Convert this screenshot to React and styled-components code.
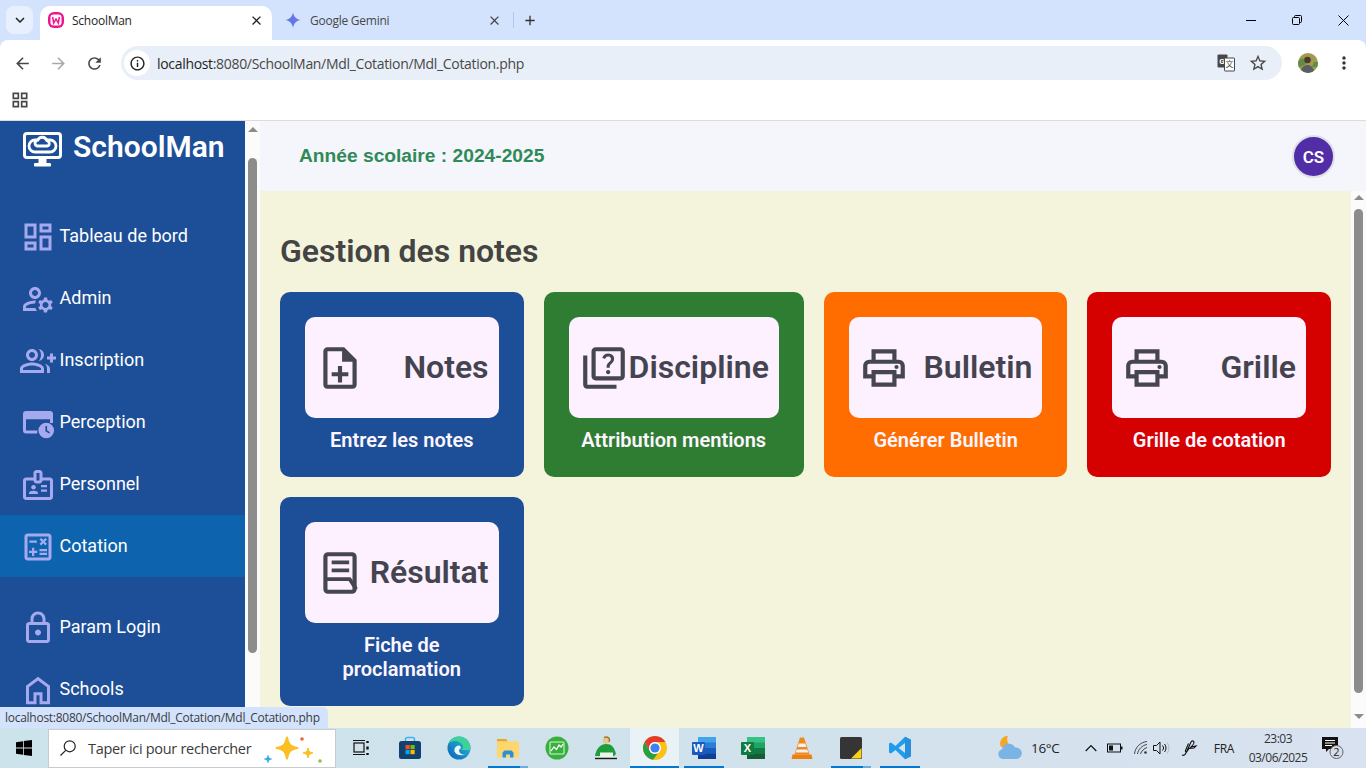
import React from "react";
import styled, { createGlobalStyle } from "styled-components";
import {
  MdArrowBack, MdArrowForward, MdRefresh, MdOutlineInfo, MdStarBorder, MdMoreVert, MdClose, MdAdd,
  MdKeyboardArrowDown, MdOutlineGridView, MdOutlineDashboard, MdOutlineManageAccounts, MdOutlineGroupAdd,
  MdOutlineBadge, MdOutlineCalculate, MdOutlineLock, MdOutlineNoteAdd, MdOutlineQuiz,
  MdOutlinePrint,
} from "react-icons/md";

const Global = createGlobalStyle`
  html, body { margin: 0; padding: 0; width: 1366px; height: 768px; overflow: hidden; }
  * { box-sizing: border-box; }
  body { font-family: Roboto, "Liberation Sans", sans-serif; }
`;

const UI = `"Open Sans", "Noto Sans", "Liberation Sans", sans-serif`;

const Root = styled.div`
  position: relative; width: 1366px; height: 768px; overflow: hidden;
  display: flex; flex-direction: column; background: #fff;
`;

/* ---------- browser chrome ---------- */
const TabStrip = styled.div`
  height: 40px; flex: none; background: #d3e3fd; display: flex; align-items: flex-end; padding-left: 6px;
`;
const TabMenu = styled.div`
  width: 27px; height: 28px; margin-bottom: 6px; margin-right: 7px; border-radius: 8px; background: #e8f0fe;
  display: flex; align-items: center; justify-content: center; color: #1f1f1f; font-size: 18px;
`;
const Tab = styled.div`
  height: 34px; width: ${p => p.$w}px; display: flex; align-items: center;
  padding: 0 ${p => p.$pr}px 6px ${p => p.$pl}px; gap: ${p => p.$gap}px;
  border-radius: 10px 10px 0 0; background: ${p => (p.$active ? "#fff" : "transparent")};
  font: 12px ${UI}; letter-spacing: -0.25px; color: ${p => (p.$active ? "#1f1f1f" : "#474747")};
`;
const TabTitle = styled.span`flex: 1; white-space: nowrap;`;
const TabClose = styled.span`
  width: 16px; height: 16px; display: flex; align-items: center; justify-content: center; font-size: 15px;
  color: ${p => (p.$active ? "#1f1f1f" : "#474747")};
`;
const TabSeparator = styled.div`width: 1px; height: 16px; background: #a8c7fa; margin: 0 0 12px 1px;`;
const NewTab = styled.div`
  width: 16px; height: 16px; margin: 0 0 12px 8px; font-size: 17px; color: #333;
  display: flex; align-items: center; justify-content: center;
`;
const WindowControls = styled.div`margin-left: auto; display: flex; height: 40px;`;
const WindowButton = styled.div`
  width: 46px; height: 40px; display: flex; align-items: center; justify-content: center; color: #000;
`;
const ToolbarWrap = styled.div`background: #d3e3fd; flex: none;`;
const Toolbar = styled.div`
  height: 40px; display: flex; align-items: center; padding: 6px 0 0 4px; background: #fff;
  border-radius: 8px 8px 0 0;
`;
const NavButton = styled.div`
  width: 36px; height: 34px; display: flex; align-items: center; justify-content: center; font-size: 19px;
  color: ${p => (p.$off ? "#a9a9a9" : "#474747")};
`;
const Omnibox = styled.div`
  width: 1161px; height: 34px; margin-left: 9px; border-radius: 17px; background: #e9eff8;
  display: flex; align-items: center; padding: 0 8px 0 3px;
`;
const InfoBadge = styled.div`
  width: 26px; height: 26px; border-radius: 50%; background: #fff; display: flex; align-items: center;
  justify-content: center; font-size: 17px; color: #1f1f1f; margin-right: 7px;
`;
const Url = styled.div`
  font: 14px ${UI}; letter-spacing: -0.32px; color: #474747; white-space: nowrap; flex: 1;
  b { font-weight: 400; color: #1f1f1f; }
`;
const OmniIcon = styled.div`
  width: 32px; height: 20px; display: flex; align-items: center; justify-content: center; color: #474747; font-size: 20px;
`;
const ProfileSlot = styled.div`
  width: 20px; height: 20px; margin-left: 16px; border-radius: 50%; overflow: hidden; flex: none;
`;
const MenuSlot = styled.div`
  width: 24px; height: 24px; margin-left: 14px; display: flex; align-items: center; justify-content: center;
  font-size: 20px; color: #333;
`;
const Bookmarks = styled.div`
  height: 41px; flex: none; background: #fff; border-bottom: 1px solid #dedcd6; padding-left: 10px;
  display: flex; align-items: center; font-size: 20px; color: #474747;
`;

/* ---------- page ---------- */
const Page = styled.div`flex: 1; min-height: 0; display: flex;`;
const Sidebar = styled.nav`
  width: 245px; flex: none; background: #1d4f98; overflow: hidden; color: #fff;
`;
const Brand = styled.div`
  height: 84px; display: flex; align-items: flex-start; padding: 11px 0 0 23px; gap: 11px;
`;
const BrandName = styled.div`
  font-size: 30px; line-height: 30px; font-weight: 600; color: #fff;
`;
const NavItem = styled.div`
  height: 62px; display: flex; align-items: center; gap: 3.5px; padding-left: 20px; flex: none;
  background: ${p => (p.$active ? "#0d63ae" : "transparent")};
  margin-top: ${p => (p.$spaced ? "19px" : "0")};
  font-size: 18px; color: #fff;
`;
const NavIcon = styled.span`
  width: 36px; height: 36px; flex: none; color: #a6a9ee; font-size: 36px; display: block; margin-top: 2px;
  svg { display: block; }
`;
const NavLabel = styled.span`margin-top: -2px;`;
const ScrollTrack = styled.div`
  width: 15px; flex: none; background: #fbfbfb; display: flex; flex-direction: column; align-items: center; position: relative;
`;
const ScrollArrow = styled.div`
  width: 0; height: 0; margin-top: ${p => p.$mt}px; border-left: 5px solid transparent; border-right: 5px solid transparent;
  ${p => (p.$down ? "border-top: 5px solid #8c8c8c;" : "border-bottom: 5px solid #8c8c8c;")}
  flex: none;
`;
const ScrollThumb = styled.div`
  width: 9px; height: ${p => p.$h}px; margin-top: ${p => p.$mt}px; border-radius: 5px; background: #8c8c8c; flex: none;
`;
const Main = styled.div`flex: 1; min-width: 0; display: flex; flex-direction: column;`;
const Header = styled.header`
  height: 70px; flex: none; background: #f5f5fc; display: flex; align-items: center; justify-content: space-between;
  padding: 0 31px 0 39px;
`;
const SchoolYear = styled.div`
  font: bold 19.2px "Liberation Sans", Arial, sans-serif; color: #2e8b57;
`;
const UserBadge = styled.div`
  width: 43px; height: 43px; border-radius: 50%; background: #512da8; border: 2px solid #dfdfe6; color: #fff;
  display: flex; align-items: center; justify-content: center; font-size: 17px; font-weight: 600; margin-top: 1px;
`;
const ContentRow = styled.div`flex: 1; min-height: 0; display: flex;`;
const Content = styled.main`flex: 1; min-width: 0; background: #f4f4dc; padding: 41px 20px 0; overflow: hidden;`;
const Title = styled.h1`
  margin: 0 0 22px; font-size: 32px; line-height: 38px; font-weight: 600; color: #444;
`;
const Grid = styled.div`display: grid; grid-template-columns: repeat(4, 1fr); gap: 20px;`;
const Card = styled.div`
  background: ${p => p.$color}; border-radius: 10px; padding: 25px; color: #fff; align-self: start;
`;
const CardTop = styled.div`
  height: 101px; background: #fdf0ff; border-radius: 10px; padding: 0 10px; display: flex; align-items: center;
  justify-content: space-between; color: #46464f;
`;
const CardIcon = styled.span`font-size: 50px; width: 50px; height: 50px; flex: none; svg { display: block; }`;
const CardName = styled.span`font-size: 32px; font-weight: 600; color: #444450; white-space: nowrap; margin-top: -2px;`;
const CardLabel = styled.div`
  margin-top: 10px; text-align: center; font-size: 20px; line-height: 24px; font-weight: 600; color: #fdf6ff;
`;
const StatusBubble = styled.div`
  position: absolute; left: 0; top: 707px; width: 328px; height: 21px; background: #d3e3fd; border-radius: 0 5px 0 0;
  font: 12px ${UI}; letter-spacing: -0.27px; color: #3c3c3c; padding: 2px 0 0 5px; white-space: nowrap;
`;

/* ---------- taskbar ---------- */
const Taskbar = styled.footer`
  height: 40px; flex: none; display: flex; align-items: center;
  background: linear-gradient(90deg, #cde3ec 0%, #d0e2ec 50%, #d9e2f0 100%);
`;
const StartSlot = styled.div`width: 48px; height: 40px; display: flex; align-items: center; justify-content: center;`;
const SearchBox = styled.div`
  width: 288px; height: 39px; background: #fff; border: 1px solid #c5cbd0; display: flex; align-items: center;
  padding-left: 11px; font: 14.5px ${UI}; letter-spacing: -0.3px; color: #3a3a3a; position: relative;
`;
const SearchText = styled.span`margin-left: 12px; white-space: nowrap; flex: 1;`;
const TaskSlot = styled.div`
  width: 49px; height: 40px; flex: none; display: flex; align-items: center; justify-content: center; position: relative;
  background: ${p => (p.$active ? "#e8f2f7" : "transparent")};
  &::after {
    content: ""; display: ${p => (p.$open ? "block" : "none")}; position: absolute; bottom: 0;
    left: ${p => (p.$active ? 0 : 5)}px; right: ${p => (p.$active ? 0 : 4)}px; height: 2px;
    background: ${p => (p.$stack ? "linear-gradient(90deg, #0078d4 80%, #6aaee0 80%)" : "#0078d4")};
  }
`;
const TaskApps = styled.div`display: flex;`;
const Tray = styled.div`margin-left: auto; display: flex; align-items: center; height: 40px; color: #222; padding-right: 8px;`;
const Weather = styled.div`display: flex; align-items: center; gap: 8px; font: 13.5px ${UI}; letter-spacing: -0.3px; width: 82px;`;
const TrayIcon = styled.div`
  width: ${p => p.$w || 24}px; margin-left: ${p => p.$ml || 0}px; height: 40px; display: flex; align-items: center;
  justify-content: center; flex: none;
`;
const TrayLang = styled.div`width: 34px; text-align: center; font: 12px ${UI}; letter-spacing: -0.3px;`;
const Clock = styled.div`
  width: 60px; margin-left: 7px; text-align: center; font: 12px/19px ${UI}; letter-spacing: -0.5px; color: #333;
`;
const NotifySlot = styled.div`width: 50px; height: 40px; display: flex; align-items: center; justify-content: center;`;

/* ---------- drawn icons ---------- */
const WampIcon = () => (
  <svg width="16" height="16" viewBox="0 0 16 16">
    <rect width="16" height="16" rx="6" fill="#f0148c" />
    <rect x="2.5" y="2.5" width="11" height="11" rx="3" fill="#fff" />
    <path d="M4.6 5l1.1 6 2.3-4 2.3 4 1.1-6" fill="none" stroke="#f0148c" strokeWidth="1.5" />
  </svg>
);
const GeminiIcon = () => (
  <svg width="16" height="16" viewBox="0 0 16 16">
    <defs><linearGradient id="gem" x1="0" y1="1" x2="1" y2="0"><stop offset="0" stopColor="#3f7df0" /><stop offset="1" stopColor="#8a6fe0" /></linearGradient></defs>
    <path d="M8 0C8.600 4.600 11.400 7.400 16 8 11.400 8.600 8.600 11.400 8 16 7.400 11.400 4.600 8.600 0 8 4.600 7.400 7.400 4.600 8 0Z" fill="url(#gem)" />
  </svg>
);
const MinimizeIcon = () => <svg width="10" height="10" viewBox="0 0 10 10"><path d="M0 5.500h10" stroke="#000" /></svg>;
const RestoreIcon = () => (
  <svg width="10" height="10" viewBox="0 0 10 10" fill="none" stroke="#000"><rect x=".5" y="2.500" width="7" height="7" rx="1" /><path d="M2.500 2.500V1.500a1 1 0 0 1 1-1h5a1 1 0 0 1 1 1v5a1 1 0 0 1-1 1h-1" /></svg>
);
const CloseIcon = () => <svg width="11" height="11" viewBox="0 0 11 11"><path d="M.5.500l10 10M10.500.500l-10 10" stroke="#000" /></svg>;
const TranslateIcon = () => (
  <svg width="18" height="18" viewBox="0 0 18 18">
    <rect x="0.500" y="0.500" width="10" height="13" rx="1" fill="#474747" />
    <text x="2.200" y="9.500" fontSize="8" fontWeight="700" fill="#fff" fontFamily="Roboto, sans-serif">G</text>
    <rect x="7.500" y="4" width="10" height="13" rx="0.500" fill="#fff" stroke="#474747" />
    <text x="8.600" y="13" fontSize="8" fill="#474747" fontFamily="'Noto Sans CJK SC', sans-serif">文</text>
  </svg>
);
const ProfilePhoto = () => (
  <svg width="20" height="20" viewBox="0 0 20 20">
    <rect width="20" height="20" fill="#a29a4f" />
    <path d="M0 8l5-3 3 6-8 4zM20 9l-4 0-2 5 6 0z" fill="#5f8d46" />
    <circle cx="9.500" cy="7" r="3.300" fill="#4b3a2e" />
    <path d="M2.500 20c.5-6 4-8 7-8s6 2 7 8z" fill="#5a5f66" />
  </svg>
);
const BrandLogo = () => (
  <svg width="39" height="35" viewBox="0 0 39 35" fill="none" stroke="#fff">
    <rect x="1.500" y="1.500" width="36" height="24" rx="2.500" strokeWidth="3" />
    <rect x="15.500" y="26" width="8" height="5" fill="#fff" stroke="none" />
    <rect x="11" y="31" width="17" height="3.500" rx="1" fill="#fff" stroke="none" />
    <rect x="6" y="8" width="27" height="12" rx="6" strokeWidth="2.800" />
    <path d="M14 14a3 3 0 0 1 .8-5.800 4.800 4.800 0 0 1 9 .4 2.800 2.800 0 0 1 .6 5.400z" fill="#1d4f98" strokeWidth="2.800" />
  </svg>
);
const CardClockIcon = () => (
  <svg width="1em" height="1em" viewBox="0 0 24 24" fill="currentColor">
    <path d="M4 4h16a2 2 0 0 1 2 2v6h-2V9.500H4V17h7.500v2H4a2 2 0 0 1-2-2V6a2 2 0 0 1 2-2z" />
    <circle cx="17.500" cy="17" r="5.200" />
    <path d="M17.500 14v3.200l2.200 1.400" fill="none" stroke="#1d4f98" strokeWidth="1.100" />
  </svg>
);
const HomeIcon = () => (
  <svg width="1em" height="1em" viewBox="0 0 24 24" fill="currentColor">
    <path d="M6 19.500h3v-6h6v6h3v-9.300l-6-4.500-6 4.500zM4 21.500V9.200l8-6 8 6v12.300h-7v-6h-2v6z" />
  </svg>
);
const SummaryIcon = () => (
  <svg width="1em" height="1em" viewBox="0 0 24 24" fill="none" stroke="currentColor">
    <rect x="5" y="3" width="14" height="18" rx="1.200" strokeWidth="2" />
    <path d="M8 6.900h8.400M8 10.700h8.400" strokeWidth="1.800" />
    <path d="M5 14.900h11.600l3.200 4.900" strokeWidth="1.800" />
  </svg>
);
const WindowsLogo = () => (
  <svg width="16" height="16" viewBox="0 0 16 16" fill="#000">
    <path d="M0 2.200L7 1.200V7.600H0zM7.800 1.100L16 0V7.600H7.800zM0 8.400H7V14.800L0 13.800zM7.800 8.400H16V16L7.800 14.900z" />
  </svg>
);
const SearchIcon = () => (
  <svg width="16" height="16" viewBox="0 0 16 16" fill="none" stroke="#222" strokeWidth="1.200">
    <circle cx="9.700" cy="6.300" r="5.500" /><path d="M5.700 10.300L.5 15.500" />
  </svg>
);
const Star4 = ({ x, y, s, c }) => (
  <path transform={`translate(${x} ${y}) scale(${s})`} d="M0-10C1.500-3 3-1.500 10 0 3 1.500 1.500 3 0 10-1.500 3-3 1.500-10 0-3-1.500-1.500-3 0-10Z" fill={c} stroke={c} strokeWidth="2" strokeLinejoin="round" />
);
const Sparkles = () => (
  <svg width="64" height="32" viewBox="0 0 64 32" style={{ position: "absolute", right: 9, top: 3 }}>
    <Star4 x={25} y={15} s={1.05} c="#fbbf24" />
    <Star4 x={46} y={20} s={0.5} c="#fbbf24" />
    <Star4 x={6} y={26} s={0.36} c="#29a8e6" />
    <circle cx="40" cy="6" r="1.800" fill="#e8683a" />
    <circle cx="58" cy="28" r="1.800" fill="#8cc63f" />
  </svg>
);
const TaskViewIcon = () => (
  <svg width="18" height="18" viewBox="0 0 18 18" fill="none" stroke="#111" strokeWidth="1.200">
    <rect x="2" y="4" width="10" height="9" /><path d="M1 1.500h12M1 15.500h12" /><path d="M15.500 2v2M15.500 7.500v3M15.500 14v2" strokeWidth="2.400" />
  </svg>
);
const StoreIcon = () => (
  <svg width="24" height="24" viewBox="0 0 24 24">
    <path d="M7.500 5V3.500A2 2 0 0 1 9.500 1.500h5a2 2 0 0 1 2 2V5" fill="none" stroke="#3fb4ea" strokeWidth="1.600" />
    <rect x="1" y="5" width="22" height="18" rx="2.500" fill="#12406f" />
    <rect x="7.500" y="9" width="4.200" height="4.200" fill="#f25022" /><rect x="12.500" y="9" width="4.200" height="4.200" fill="#7fba00" />
    <rect x="7.500" y="14" width="4.200" height="4.200" fill="#00a4ef" /><rect x="12.500" y="14" width="4.200" height="4.200" fill="#ffb900" />
  </svg>
);
const EdgeIcon = () => (
  <svg width="24" height="24" viewBox="0 0 24 24">
    <defs><linearGradient id="edgeA" x1="0" y1="1" x2="1" y2="0"><stop offset="0" stopColor="#0a5fb8" /><stop offset="1" stopColor="#2cc4d8" /></linearGradient></defs>
    <circle cx="12" cy="12" r="11.500" fill="url(#edgeA)" />
    <path d="M23.500 12c0-6-5-11.500-11.500-11.500C7 .5 3 3.500 1.500 8 4 5 8 4.500 11 5.500c3 1 5 3 5 5.500 0 1.500-1 2.500-2 3h9.300c.2-.7.2-1.300.2-2z" fill="#3ed29a" />
    <path d="M12 9.500a4.500 4.500 0 0 0-3.500 7.500c2 2.200 6.500 3 10.500 1.500-3 .5-5.500-.5-6.500-2.300-.8-1.400-.5-3.200 1.500-4.200-.3-1.400-1-2.500-2-2.500z" fill="#e8f8f4" />
  </svg>
);
const ExplorerIcon = () => (
  <svg width="24" height="24" viewBox="0 0 24 24">
    <path d="M1 3h9l2 2.500H1z" fill="#e8a91f" />
    <rect x="1" y="5.500" width="22" height="16" rx="1" fill="#ffd66b" />
    <path d="M6.500 21.500v-5l2-2h7l2 2v5H14v-3h-4v3z" fill="#2a8fdc" />
  </svg>
);
const ChartIcon = () => (
  <svg width="24" height="24" viewBox="0 0 24 24">
    <circle cx="12" cy="12" r="11.500" fill="#38b03d" />
    <rect x="5" y="6" width="14" height="12" rx="1" fill="none" stroke="#d8f5d8" strokeWidth="1.100" />
    <path d="M6 15l3-4 2.500 2.500L14 9l2 2 2-3" fill="none" stroke="#fff" strokeWidth="1.200" />
  </svg>
);
const FigureIcon = () => (
  <svg width="24" height="24" viewBox="0 0 24 24">
    <circle cx="12" cy="4.500" r="3.200" fill="#e9c68f" />
    <path d="M1 20c1-7 5-12 11-12s8 3 10 10l-2 2z" fill="#1f9d3a" />
    <rect x="6" y="16.500" width="13" height="4.500" fill="#eef5e8" />
    <path d="M1 22.500h22" stroke="#1a1a1a" strokeWidth="1.400" />
    <path d="M10 1.500c4-1.500 6.500 1 5 4.500" stroke="#a3782e" strokeWidth="1.500" fill="none" />
  </svg>
);
const ChromeIcon = () => (
  <svg width="24" height="24" viewBox="0 0 24 24">
    <circle cx="12" cy="12" r="12" fill="#fbc116" />
    <path d="M12 0a12 12 0 0 1 10.400 6H12a6 6 0 0 0-5.200 9L1.600 6A12 12 0 0 1 12 0z" fill="#e33b2e" />
    <path d="M1.600 6l5.200 9a6 6 0 0 0 8.200 2.200l-5 6.600A12 12 0 0 1 1.600 6z" fill="#2a9d47" />
    <circle cx="12" cy="12" r="6" fill="#fff" /><circle cx="12" cy="12" r="4.600" fill="#3e82f1" />
  </svg>
);
const OfficeIcon = ({ a, b, c, d, dark, letter }) => (
  <svg width="26" height="24" viewBox="0 0 26 24">
    <rect x="7" y="1" width="18" height="22" rx="1" fill={b} />
    <rect x="7" y="1" width="18" height="5.500" fill={a} />
    <rect x="7" y="12" width="18" height="5.500" fill={c} />
    <rect x="7" y="17.500" width="18" height="5.500" fill={d} />
    <rect x="1" y="6" width="13" height="13" rx="1" fill={dark} />
    <text x="7.500" y="16.300" textAnchor="middle" fontSize="11" fontWeight="700" fill="#fff" fontFamily="'Liberation Sans', sans-serif">{letter}</text>
  </svg>
);
const VlcIcon = () => (
  <svg width="22" height="24" viewBox="0 0 22 24">
    <path d="M9 1.500h4l5.500 17h-15z" fill="#f08a1d" />
    <path d="M7.700 7.500h6.600l1 3.500H6.700zM5.700 13.500h10.600l1 3H4.700z" fill="#f2f2f2" />
    <path d="M1.500 18.500h19l1 4.500H.5z" fill="#ee7f10" />
  </svg>
);
const StickyIcon = () => (
  <svg width="22" height="22" viewBox="0 0 22 22">
    <rect width="22" height="22" rx="1.500" fill="#353535" />
    <path d="M11 21.500l10.500-10.500v9a1.500 1.500 0 0 1-1.500 1.500z" fill="#fcd116" />
  </svg>
);
const VscodeIcon = () => (
  <svg width="24" height="24" viewBox="0 0 24 24">
    <path d="M17 .8L7.500 10 3 6.500 1 7.600v8.800l2 1.100 4.500-3.500L17 23.200l6-2.900V3.700zM17 7v10l-6.500-5z" fill="#1f9cf0" fillRule="evenodd" />
    <path d="M17 .8l6 2.900v16.600l-6 2.900z" fill="#2a8fdb" />
  </svg>
);
const WeatherIcon = () => (
  <svg width="26" height="26" viewBox="0 0 26 26">
    <path d="M11 1a7.500 7.500 0 0 0 6 11H4a7.500 7.500 0 0 1 7-11z" fill="#f6a623" />
    <path d="M6 24a5 5 0 0 1-1-9.800A7 7 0 0 1 18 12.500a5.800 5.800 0 0 1 2 11.500z" fill="#7ab4e4" />
  </svg>
);
const CaretIcon = () => <svg width="12" height="8" viewBox="0 0 12 8"><path d="M.7 7L6 1.500 11.300 7" fill="none" stroke="#111" strokeWidth="1.200" /></svg>;
const BatteryIcon = () => (
  <svg width="16" height="10" viewBox="0 0 16 10"><rect x=".5" y="1" width="13" height="8" fill="none" stroke="#111" /><rect x="2" y="2.500" width="4" height="5" fill="#111" /><rect x="14" y="3.500" width="1.500" height="3" fill="#111" /></svg>
);
const WifiIcon = () => (
  <svg width="14" height="14" viewBox="0 0 14 14" fill="none" stroke="#333" strokeWidth=".9">
    <path d="M.5 13C1 6.500 6.500 1 13 .5M3.500 13C4 8.500 8.500 4 13 3.500M6.500 13C7 10.500 10.500 7 13 6.500" /><circle cx="11.500" cy="11.500" r="1.300" fill="#333" stroke="none" />
  </svg>
);
const SpeakerIcon = () => (
  <svg width="18" height="14" viewBox="0 0 18 14" fill="none" stroke="#111">
    <path d="M.5 4.500h3L7 1v12L3.500 9.500h-3z" /><path d="M9.500 4.500a3.500 3.500 0 0 1 0 5M11.500 3a6 6 0 0 1 0 8" /><path d="M14 1.500a8.500 8.500 0 0 1 0 11" stroke="#bbb" />
  </svg>
);
const PenIcon = () => (
  <svg width="18" height="18" viewBox="0 0 18 18" fill="none" stroke="#111" strokeWidth="1.100">
    <path d="M1 16c2 1 3 0 4-2l5-11c.5-1.500 2.500-1.500 3 0 .3 1-1 3-3 5l5-1-2 2-5 .5-2 3c-1 1-2 .5-1.500-1l3-7" />
  </svg>
);
const NotifyIcon = () => (
  <svg width="26" height="26" viewBox="0 0 26 26">
    <path d="M2 2h16v12h-9l-3 3v-3H2z" fill="#111" />
    <path d="M5 5.500h10M5 8h10M5 10.500h7" stroke="#fff" strokeWidth="1" />
    <circle cx="16.500" cy="17" r="6.500" fill="#d6dfe9" stroke="#666" />
    <text x="16.500" y="21" textAnchor="middle" fontSize="11" fill="#222" fontFamily="'Open Sans', sans-serif">2</text>
  </svg>
);

/* ---------- data ---------- */
const NAV = [
  { label: "Tableau de bord", Icon: MdOutlineDashboard },
  { label: "Admin", Icon: MdOutlineManageAccounts },
  { label: "Inscription", Icon: MdOutlineGroupAdd },
  { label: "Perception", Icon: CardClockIcon },
  { label: "Personnel", Icon: MdOutlineBadge },
  { label: "Cotation", Icon: MdOutlineCalculate, active: true },
  { label: "Param Login", Icon: MdOutlineLock, spaced: true },
  { label: "Schools", Icon: HomeIcon },
];
const CARDS = [
  { name: "Notes", label: "Entrez les notes", color: "#1d4f98", Icon: MdOutlineNoteAdd },
  { name: "Discipline", label: "Attribution mentions", color: "#2e7d32", Icon: MdOutlineQuiz },
  { name: "Bulletin", label: "Générer Bulletin", color: "#ff6d00", Icon: MdOutlinePrint },
  { name: "Grille", label: "Grille de cotation", color: "#d50000", Icon: MdOutlinePrint },
  { name: "Résultat", label: "Fiche de proclamation", color: "#1d4f98", Icon: SummaryIcon },
];
const APPS = [
  { el: <TaskViewIcon /> },
  { el: <StoreIcon /> },
  { el: <EdgeIcon /> },
  { el: <ExplorerIcon />, open: true, stack: true },
  { el: <ChartIcon /> },
  { el: <FigureIcon /> },
  { el: <ChromeIcon />, open: true, active: true },
  { el: <OfficeIcon a="#41a5ee" b="#2b7cd3" c="#185abd" d="#103f91" dark="#185abd" letter="W" />, open: true },
  { el: <OfficeIcon a="#33c481" b="#21a366" c="#107c41" d="#185c37" dark="#107c41" letter="X" /> },
  { el: <VlcIcon /> },
  { el: <StickyIcon />, open: true, stack: true },
  { el: <VscodeIcon />, open: true },
];

export default function App() {
  return (
    <Root>
      <Global />
      <TabStrip>
        <TabMenu><MdKeyboardArrowDown /></TabMenu>
        <Tab $active $w={232} $pl={8} $pr={8} $gap={8}>
          <WampIcon /><TabTitle>SchoolMan</TabTitle><TabClose $active><MdClose /></TabClose>
        </Tab>
        <Tab $w={240} $pl={13} $pr={10} $gap={9}>
          <GeminiIcon /><TabTitle>Google Gemini</TabTitle><TabClose><MdClose /></TabClose>
        </Tab>
        <TabSeparator />
        <NewTab><MdAdd /></NewTab>
        <WindowControls>
          <WindowButton><MinimizeIcon /></WindowButton>
          <WindowButton><RestoreIcon /></WindowButton>
          <WindowButton><CloseIcon /></WindowButton>
        </WindowControls>
      </TabStrip>
      <ToolbarWrap>
        <Toolbar>
          <NavButton><MdArrowBack /></NavButton>
          <NavButton $off><MdArrowForward /></NavButton>
          <NavButton><MdRefresh /></NavButton>
          <Omnibox>
            <InfoBadge><MdOutlineInfo /></InfoBadge>
            <Url><b>localhost</b>:8080/SchoolMan/Mdl_Cotation/Mdl_Cotation.php</Url>
            <OmniIcon><TranslateIcon /></OmniIcon>
            <OmniIcon><MdStarBorder /></OmniIcon>
          </Omnibox>
          <ProfileSlot><ProfilePhoto /></ProfileSlot>
          <MenuSlot><MdMoreVert /></MenuSlot>
        </Toolbar>
      </ToolbarWrap>
      <Bookmarks><MdOutlineGridView /></Bookmarks>
      <Page>
        <Sidebar>
          <Brand><BrandLogo /><BrandName>SchoolMan</BrandName></Brand>
          {NAV.map(({ label, Icon, active, spaced }) => (
            <NavItem key={label} $active={active} $spaced={spaced}>
              <NavIcon><Icon /></NavIcon>
              <NavLabel>{label}</NavLabel>
            </NavItem>
          ))}
        </Sidebar>
        <ScrollTrack>
          <ScrollArrow $mt={6} />
          <ScrollThumb $mt={26} $h={495} />
        </ScrollTrack>
        <Main>
          <Header>
            <SchoolYear>Année scolaire : 2024-2025</SchoolYear>
            <UserBadge>CS</UserBadge>
          </Header>
          <ContentRow>
            <Content>
              <Title>Gestion des notes</Title>
              <Grid>
                {CARDS.map(({ name, label, color, Icon }) => (
                  <Card key={name} $color={color}>
                    <CardTop>
                      <CardIcon><Icon /></CardIcon>
                      <CardName>{name}</CardName>
                    </CardTop>
                    <CardLabel>{label}</CardLabel>
                  </Card>
                ))}
              </Grid>
            </Content>
            <ScrollTrack>
              <ScrollArrow $mt={4} />
              <ScrollThumb $mt={9} $h={484} />
              <ScrollArrow $mt={21} $down />
            </ScrollTrack>
          </ContentRow>
        </Main>
      </Page>
      <StatusBubble>localhost:8080/SchoolMan/Mdl_Cotation/Mdl_Cotation.php</StatusBubble>
      <Taskbar>
        <StartSlot><WindowsLogo /></StartSlot>
        <SearchBox>
          <SearchIcon />
          <SearchText>Taper ici pour rechercher</SearchText>
          <Sparkles />
        </SearchBox>
        <TaskApps>
          {APPS.map((a, i) => (
            <TaskSlot key={i} $open={a.open} $active={a.active} $stack={a.stack}>{a.el}</TaskSlot>
          ))}
        </TaskApps>
        <Tray>
          <Weather><WeatherIcon />16°C</Weather>
          <TrayIcon $w={24}><CaretIcon /></TrayIcon>
          <TrayIcon $w={24}><BatteryIcon /></TrayIcon>
          <TrayIcon $w={20} $ml={4}><WifiIcon /></TrayIcon>
          <TrayIcon $w={22}><SpeakerIcon /></TrayIcon>
          <TrayIcon $w={34}><PenIcon /></TrayIcon>
          <TrayLang>FRA</TrayLang>
          <Clock>23:03<br />03/06/2025</Clock>
          <NotifySlot><NotifyIcon /></NotifySlot>
        </Tray>
      </Taskbar>
    </Root>
  );
}
